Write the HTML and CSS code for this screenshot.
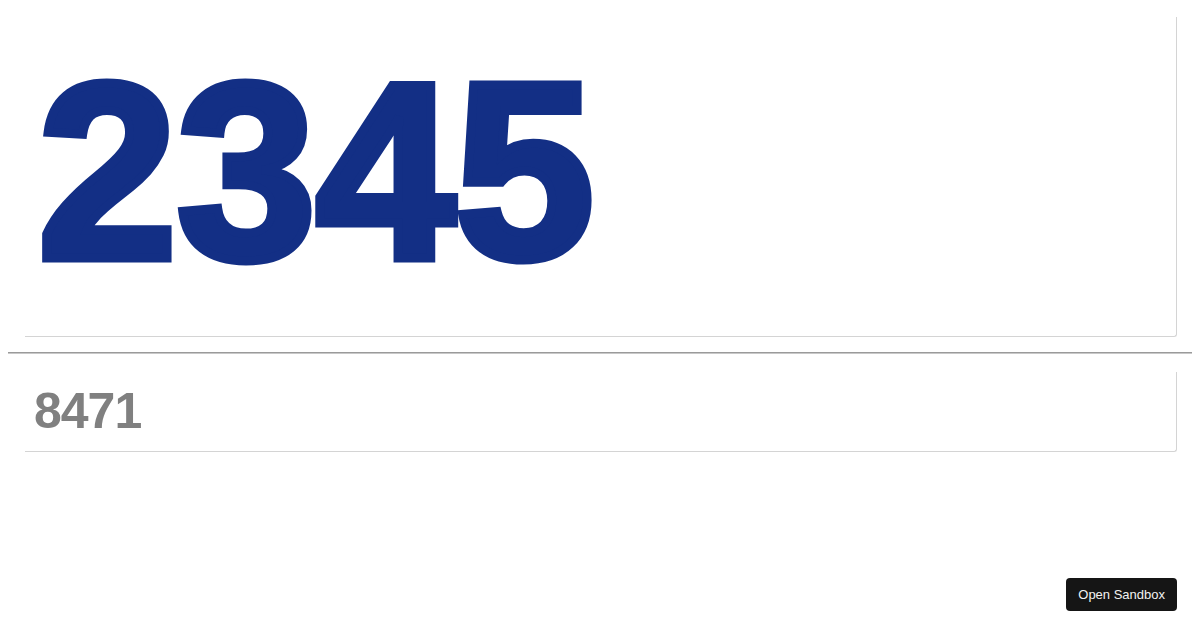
FILE: index.html
```html
<!DOCTYPE html>
<html>
<head>
<meta charset="utf-8">
<link rel="stylesheet" href="styles.css">
</head>
<body>
  <div class="card card-big">
    <span class="big-num">2345</span>
  </div>
  <hr class="divider">
  <div class="card card-small">
    <span class="small-num">8471</span>
  </div>
  <button class="sandbox-btn">Open Sandbox</button>
</body>
</html>
```

FILE: styles.css
```css
html, body {
  margin: 0;
  padding: 0;
  background: #ffffff;
}
body {
  padding: 8px;
  font-family: "Liberation Sans", Arial, sans-serif;
}
.card {
  margin: 9px 15px 0 17px;
  border-right: 1px solid #d4d4d4;
  border-bottom: 1px solid #d4d4d4;
  border-bottom-right-radius: 3px;
  box-sizing: border-box;
}
.card-big {
  height: 320px;
  padding: 0 0 0 13px;
  display: flex;
  align-items: flex-start;
  overflow: hidden;
}
.big-num {
  display: inline-block;
  font-size: 250px;
  font-weight: 700;
  line-height: 1;
  color: #132f85;
  letter-spacing: 0;
  -webkit-text-stroke: 9px #132f85;
  margin-top: 30px;
}
.divider {
  margin: 15px 0 0 0;
  border: none;
  border-top: 1px solid #9a9a9a;
  border-bottom: 1px solid #c8c8c8;
  height: 0;
}
.card-small {
  margin-top: 18px;
  height: 80px;
  padding: 0 0 0 9px;
  display: flex;
  align-items: center;
}
.small-num {
  font-size: 50px;
  font-weight: 700;
  color: #808080;
  letter-spacing: -1px;
  line-height: 1;
  margin-top: -2px;
}
.sandbox-btn {
  position: fixed;
  right: 23px;
  bottom: 19px;
  height: 33px;
  padding: 0 12px;
  background: #151515;
  color: #f2f2f2;
  border: none;
  border-radius: 4px;
  font-family: "Liberation Sans", Arial, sans-serif;
  font-size: 13px;
}
```
